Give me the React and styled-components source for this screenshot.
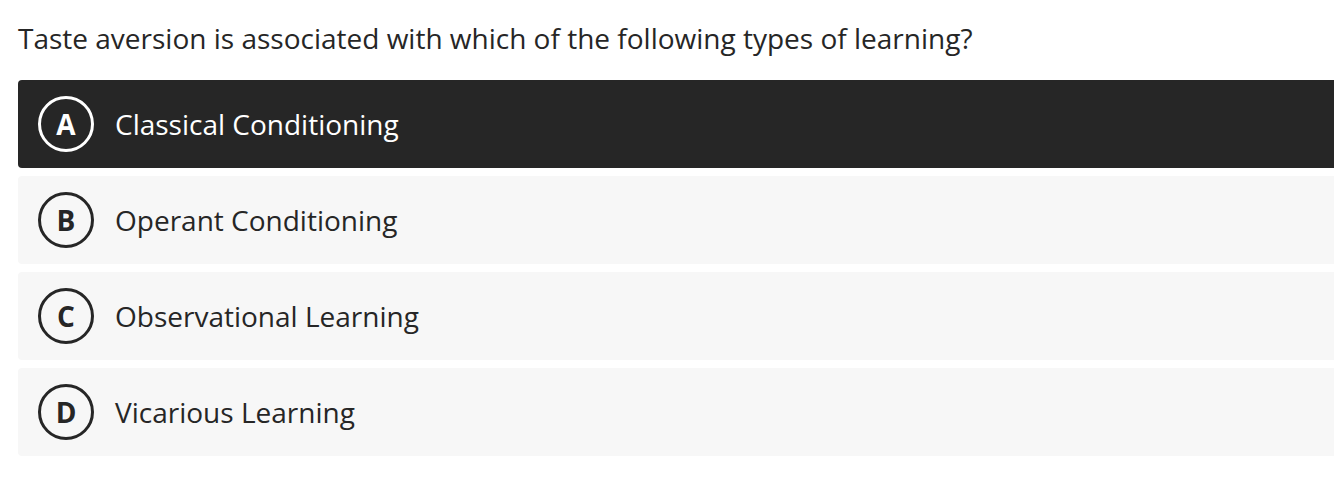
import React, { useState } from "react";
import styled, { createGlobalStyle } from "styled-components";

const GlobalStyle = createGlobalStyle`
  html, body {
    margin: 0;
    padding: 0;
    background: #ffffff;
  }
  body {
    font-family: "Open Sans", "Liberation Sans", sans-serif;
    color: #262626;
    overflow: hidden;
  }
`;

// ---------------- styled components ----------------
const Page = styled.div`
  padding: 18px 0 0 18px;
  width: 1334px;
  box-sizing: border-box;
`;
const Question = styled.h2`
  margin: 0 0 22px 0;
  font-size: 28px;
  font-weight: 400;
  line-height: 40px;
  color: #262626;
`;
const OptionList = styled.ul`
  list-style: none;
  margin: 0;
  padding: 0;
  display: flex;
  flex-direction: column;
  gap: 8px;
  margin-right: -20px;
`;
const Option = styled.li`
  display: flex;
  align-items: center;
  gap: 21px;
  height: 88px;
  padding: 0 20px;
  border-radius: 4px;
  cursor: pointer;
  background: ${(p) => (p.$selected ? "#262626" : "#f7f7f7")};
  color: ${(p) => (p.$selected ? "#ffffff" : "#262626")};
`;
const Letter = styled.span`
  flex: none;
  width: 56px;
  height: 56px;
  box-sizing: border-box;
  border: 3px solid currentColor;
  border-radius: 50%;
  display: flex;
  align-items: center;
  justify-content: center;
  font-size: 28px;
  font-weight: 700;
  line-height: 1;
`;
const Label = styled.span`
  font-size: 28px;
  line-height: 36px;
`;

const options = [
  { key: "A", text: "Classical Conditioning" },
  { key: "B", text: "Operant Conditioning" },
  { key: "C", text: "Observational Learning" },
  { key: "D", text: "Vicarious Learning" },
];

// ---------------- component ----------------
const App = () => {
  const [selected, setSelected] = useState("A");

  return (
    <Page>
      <GlobalStyle />
      <Question>
        Taste aversion is associated with which of the following types of learning?
      </Question>
      <OptionList>
        {options.map((o) => (
          <Option
            key={o.key}
            $selected={selected === o.key}
            onClick={() => setSelected(o.key)}
          >
            <Letter>{o.key}</Letter>
            <Label>{o.text}</Label>
          </Option>
        ))}
      </OptionList>
    </Page>
  );
};

export default App;
